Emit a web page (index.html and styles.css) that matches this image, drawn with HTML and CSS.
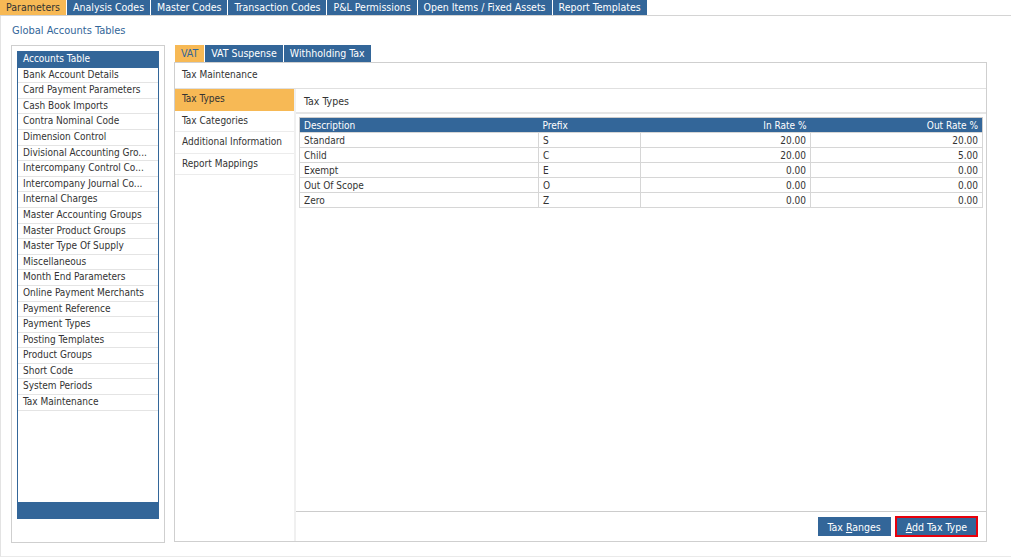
FILE: index.html
```html
<!DOCTYPE html>
<html lang="en">
<head>
  <meta charset="UTF-8" />
  <title>Parameters - Global Accounts Tables</title>
  <link rel="stylesheet" href="styles.css">
</head>
<body>
  <nav class="top-tabs">
    <div class="tab active">Parameters</div>
    <div class="tab">Analysis Codes</div>
    <div class="tab">Master Codes</div>
    <div class="tab">Transaction Codes</div>
    <div class="tab">P&amp;L Permissions</div>
    <div class="tab">Open Items / Fixed Assets</div>
    <div class="tab">Report Templates</div>
  </nav>

  <div class="page">
    <div class="page-title">Global Accounts Tables</div>

    <div class="panels">
      <div class="left-panel">
        <div class="table-list">
          <div class="list-items">
            <div class="list-item selected">Accounts Table</div>
            <div class="list-item">Bank Account Details</div>
            <div class="list-item">Card Payment Parameters</div>
            <div class="list-item">Cash Book Imports</div>
            <div class="list-item">Contra Nominal Code</div>
            <div class="list-item">Dimension Control</div>
            <div class="list-item">Divisional Accounting Gro...</div>
            <div class="list-item">Intercompany Control Co...</div>
            <div class="list-item">Intercompany Journal Co...</div>
            <div class="list-item">Internal Charges</div>
            <div class="list-item">Master Accounting Groups</div>
            <div class="list-item">Master Product Groups</div>
            <div class="list-item">Master Type Of Supply</div>
            <div class="list-item">Miscellaneous</div>
            <div class="list-item">Month End Parameters</div>
            <div class="list-item">Online Payment Merchants</div>
            <div class="list-item">Payment Reference</div>
            <div class="list-item">Payment Types</div>
            <div class="list-item">Posting Templates</div>
            <div class="list-item">Product Groups</div>
            <div class="list-item">Short Code</div>
            <div class="list-item">System Periods</div>
            <div class="list-item">Tax Maintenance</div>
          </div>
          <div class="list-footer"></div>
        </div>
      </div>

      <div class="right-panel">
        <div class="sub-tabs">
          <div class="sub-tab active">VAT</div>
          <div class="sub-tab">VAT Suspense</div>
          <div class="sub-tab">Withholding Tax</div>
        </div>

        <div class="tax-box">
          <div class="box-header">Tax Maintenance</div>
          <div class="box-body">
            <div class="side-nav">
              <div class="side-item active">Tax Types</div>
              <div class="side-item">Tax Categories</div>
              <div class="side-item">Additional Information</div>
              <div class="side-item">Report Mappings</div>
            </div>

            <div class="content">
              <div class="content-title">Tax Types</div>
              <div class="grid-wrap">
                <table class="grid">
                  <thead>
                    <tr>
                      <th class="col-desc">Description</th>
                      <th class="col-prefix">Prefix</th>
                      <th class="col-rate num">In Rate %</th>
                      <th class="num">Out Rate %</th>
                    </tr>
                  </thead>
                  <tbody>
                    <tr><td>Standard</td><td>S</td><td class="num">20.00</td><td class="num">20.00</td></tr>
                    <tr><td>Child</td><td>C</td><td class="num">20.00</td><td class="num">5.00</td></tr>
                    <tr><td>Exempt</td><td>E</td><td class="num">0.00</td><td class="num">0.00</td></tr>
                    <tr><td>Out Of Scope</td><td>O</td><td class="num">0.00</td><td class="num">0.00</td></tr>
                    <tr><td>Zero</td><td>Z</td><td class="num">0.00</td><td class="num">0.00</td></tr>
                  </tbody>
                </table>
              </div>
              <div class="toolbar">
                <button class="btn">Tax <u>R</u>anges</button>
                <button class="btn focused"><u>A</u>dd Tax Type</button>
              </div>
            </div>
          </div>
        </div>
      </div>
    </div>
  </div>
</body>
</html>
```

FILE: styles.css
```css
* {
  box-sizing: border-box;
}

body {
  margin: 0;
  font-family: 'DejaVu Sans Condensed', 'DejaVu Sans', sans-serif;
  font-size: 10px;
  color: #333;
  background: #fff;
}

/* top tabs */
.top-tabs {
  display: flex;
  gap: 1px;
  height: 16px;
  border-bottom: 1px solid #d4d4d4;
}

.tab {
  height: 15px;
  line-height: 15px;
  padding: 0 6px;
  font-size: 10.5px;
  background: #336699;
  color: #fff;
  white-space: nowrap;
}

.tab.active {
  background: #f7b955;
  color: #333;
}

/* page */
.page {
  height: 541px;
  border-left: 1px solid #e3e3e3;
  border-bottom: 1px solid #eaeaea;
  padding: 0 10px;
}

.page-title {
  height: 29px;
  padding: 8px 0 0 1px;
  font-size: 11px;
  color: #336699;
}

.panels {
  display: flex;
  gap: 9px;
}

/* left list */
.left-panel {
  width: 154px;
  height: 498px;
  border: 1px solid #cfcfcf;
  padding: 5px;
}

.table-list {
  height: 468px;
  display: flex;
  flex-direction: column;
}

.list-items {
  flex: 1;
  border: 1px solid #336699;
  border-bottom: none;
}

.list-item {
  height: 15.6px;
  line-height: 14px;
  padding-left: 5px;
  border-bottom: 1px solid #e4e4e4;
  white-space: nowrap;
  overflow: hidden;
}

.list-item.selected {
  background: #336699;
  color: #fff;
  border-bottom-color: #336699;
}

.list-footer {
  height: 17px;
  background: #336699;
}

/* right side */
.right-panel {
  width: 813px;
  display: flex;
  flex-direction: column;
}

.sub-tabs {
  display: flex;
  gap: 1px;
  padding-left: 1px;
  height: 17px;
}

.sub-tab {
  line-height: 17px;
  padding: 0 6px;
  font-size: 10.5px;
  background: #336699;
  color: #fff;
}

.sub-tab.active {
  background: #f7b955;
  color: #336699;
}

.tax-box {
  height: 480px;
  border: 1px solid #cfcfcf;
  display: flex;
  flex-direction: column;
}

.box-header {
  height: 26px;
  line-height: 24px;
  padding-left: 7px;
  border-bottom: 1px solid #e0e0e0;
}

.box-body {
  flex: 1;
  display: flex;
}

.side-nav {
  width: 121px;
  border-right: 2px solid #f0f0f0;
}

.side-item {
  height: 21.5px;
  line-height: 20px;
  padding-left: 7px;
  border-bottom: 1px solid #ececec;
}

.side-item.active {
  background: #f7b955;
  border-bottom-color: #f7b955;
}

.content {
  flex: 1;
  display: flex;
  flex-direction: column;
}

.content-title {
  height: 25px;
  line-height: 25px;
  padding-left: 8px;
  border-bottom: 2px solid #e6e6e6;
  font-size: 10.5px;
}

.grid-wrap {
  flex: 1;
  padding: 3px 3px 0;
}

.grid {
  width: 100%;
  border-collapse: collapse;
  border: 1px solid #cccccc;
}

.grid th {
  background: #336699;
  color: #fff;
  font-weight: normal;
  text-align: left;
  height: 15px;
  padding: 0 4px;
}

.grid td {
  height: 15px;
  padding: 0 4px;
  border: 1px solid #d6d6d6;
}

.grid .num {
  text-align: right;
}

.col-desc {
  width: 239px;
}

.col-prefix {
  width: 102px;
}

.col-rate {
  width: 170px;
}

.toolbar {
  height: 30px;
  border-top: 1px solid #cccccc;
  display: flex;
  justify-content: flex-end;
  align-items: center;
  gap: 4px;
  padding-right: 8px;
}

.btn {
  font-family: inherit;
  font-size: 10.5px;
  height: 19px;
  padding: 0 9px;
  border: 1px solid #336699;
  background: #336699;
  color: #fff;
}

.btn.focused {
  height: 21px;
  padding: 0 9px;
  border: 2px solid #e8000b;
}
```
